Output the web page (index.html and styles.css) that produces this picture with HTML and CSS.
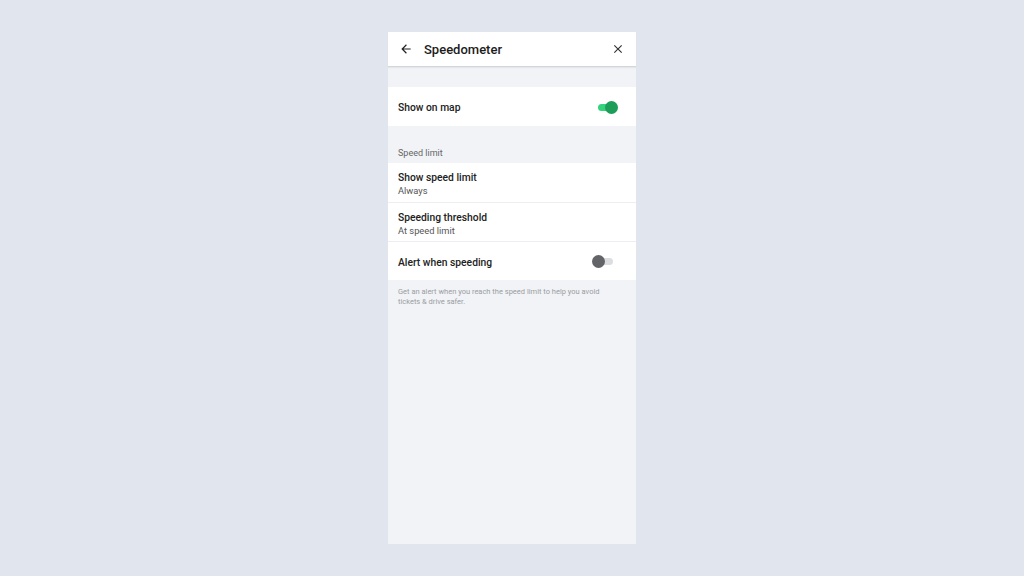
FILE: index.html
```html
<!DOCTYPE html>
<html>
<head>
<meta charset="utf-8">
<link rel="stylesheet" href="styles.css">
</head>
<body>
<div class="panel">
  <div class="header">
    <svg class="icon back" width="14" height="14" viewBox="0 0 24 24"><path d="M20 11H7.83l5.59-5.59L12 4l-8 8 8 8 1.41-1.41L7.83 13H20v-2z" fill="#222"/></svg>
    <div class="title">Speedometer</div>
    <svg class="icon close" width="14" height="14" viewBox="0 0 24 24"><path d="M19 6.41L17.59 5 12 10.59 6.41 5 5 6.41 10.59 12 5 17.59 6.41 19 12 13.41 17.59 19 19 17.59 13.41 12z" fill="#333"/></svg>
  </div>
  <div class="spacer"></div>
  <div class="card">
    <div class="row single">
      <div class="row-title">Show on map</div>
      <div class="toggle on"><span class="track"></span><span class="knob"></span></div>
    </div>
  </div>
  <div class="section-label">Speed limit</div>
  <div class="card">
    <div class="row double">
      <div class="texts">
        <div class="row-title">Show speed limit</div>
        <div class="row-sub">Always</div>
      </div>
    </div>
    <div class="row double">
      <div class="texts">
        <div class="row-title">Speeding threshold</div>
        <div class="row-sub">At speed limit</div>
      </div>
    </div>
    <div class="row single">
      <div class="row-title">Alert when speeding</div>
      <div class="toggle off"><span class="track"></span><span class="knob"></span></div>
    </div>
  </div>
  <div class="footnote">Get an alert when you reach the speed limit to help you avoid tickets &amp; drive safer.</div>
</div>
</body>
</html>
```
FILE: styles.css
```css
html, body {
  margin: 0;
  padding: 0;
}
body {
  background: #e1e6ee;
  font-family: Roboto, "Noto Sans", sans-serif;
  width: 1024px;
  height: 576px;
  display: flex;
  justify-content: center;
  align-items: flex-start;
}
.panel {
  margin-top: 32px;
  width: 248px;
  height: 512px;
  background: #f1f3f6;
  display: flex;
  flex-direction: column;
}
.header {
  height: 34px;
  background: #fff;
  border-bottom: 1px solid #d3d6db;
  display: flex;
  align-items: center;
  padding: 0 11px 0 11px;
  box-shadow: 0 1px 1px rgba(0,0,0,0.05);
}
.icon.back {
  margin-right: 11px;
}
.title {
  flex: 1;
  font-size: 13px;
  font-weight: 500;
  color: #1c1c1c;
  margin-top: 1px;
}
.spacer {
  height: 20px;
}
.card {
  background: #fff;
}
.row {
  display: flex;
  align-items: center;
  justify-content: space-between;
  padding: 2px 18px 0 10px;
  height: 39px;
  box-sizing: border-box;
}
.row + .row {
  border-top: 1px solid #eceef1;
}
.row-title {
  font-size: 10.3px;
  font-weight: 500;
  color: #222;
}
.row-sub {
  font-size: 9.3px;
  color: #555;
  margin-top: 1px;
}
.section-label {
  font-size: 9px;
  color: #666;
  padding: 22px 10px 4px;
  line-height: 11px;
}
.toggle {
  position: relative;
  width: 22px;
  height: 14px;
  margin-top: -2px;
}
.toggle .track {
  position: absolute;
  left: 2px;
  top: 4px;
  width: 18px;
  height: 7px;
  border-radius: 4px;
}
.toggle .knob {
  position: absolute;
  top: 1px;
  width: 13px;
  height: 13px;
  border-radius: 50%;
}
.toggle.on .track { background: #32d47b; }
.toggle.on .knob { left: 9px; background: #1c9d58; }
.toggle.off .track { background: #dcdde0; left: 3px; }
.toggle.off .knob { left: 0; background: #626468; }
.toggle.off { margin-right: 4px; }
.footnote {
  font-size: 7.5px;
  color: #9a9da2;
  padding: 7px 28px 0 10px;
  line-height: 9.5px;
}
```
